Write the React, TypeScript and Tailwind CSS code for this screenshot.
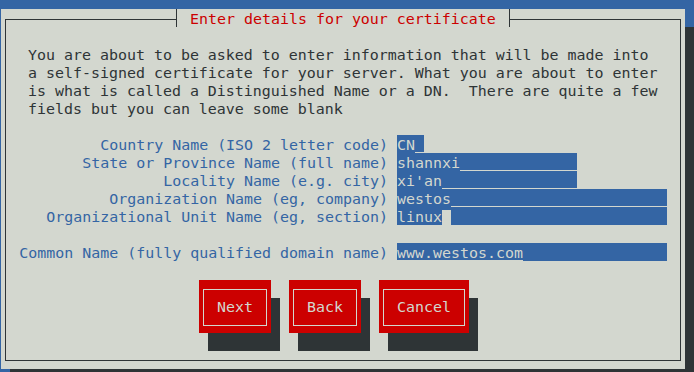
import React from "react";

function Fill({ cols }: { cols: number }) {
  return <span className="h-[18px] border-b border-[#d3d7cf]" style={{ width: cols * 9 }} />;
}

const fields: { label: string; value: React.ReactNode; w: string }[] = [
  {
    label: "Country Name (ISO 2 letter code)",
    value: (
      <>
        <span className="pt-[1px]">CN</span>
        <Fill cols={1} />
      </>
    ),
    w: "w-[27px]",
  },
  {
    label: "State or Province Name (full name)",
    value: (
      <>
        <span className="pt-[1px]">shannxi</span>
        <Fill cols={13} />
      </>
    ),
    w: "w-[180px]",
  },
  {
    label: "Locality Name (e.g. city)",
    value: (
      <>
        <span className="pt-[1px]">xi'an</span>
        <Fill cols={15} />
      </>
    ),
    w: "w-[180px]",
  },
  {
    label: "Organization Name (eg, company)",
    value: (
      <>
        <span className="pt-[1px]">westos</span>
        <Fill cols={24} />
      </>
    ),
    w: "w-[270px]",
  },
  {
    label: "Organizational Unit Name (eg, section)",
    value: (
      <>
        <span className="pt-[1px]">linux</span>
        <span className="mt-[3px] h-[15px] w-[9px] bg-[#d3d7cf]" />
      </>
    ),
    w: "w-[270px]",
  },
];

function Row({ label, value, w }: { label: string; value: React.ReactNode; w: string }) {
  return (
    <div className="flex h-[18px]">
      <div className="w-[382px] pt-[1px] text-right text-[#3465a4] whitespace-pre">{label}</div>
      <div className={`ml-[9px] flex h-[18px] items-start ${w} bg-[#3465a4] text-[#d3d7cf] whitespace-pre`}>{value}</div>
    </div>
  );
}

function Button({ label, w, first }: { label: string; w: string; first?: boolean }) {
  return (
    <div
      className={`${w} ${first ? "ml-[193px]" : "ml-[18px]"} h-[53px] bg-[#cc0000] px-[4px] pt-[9px] pb-[7px] shadow-[9px_18px_0_#2e3436]`}
    >
      <div className="h-full border border-[#d3d7cf] pl-[13px] pt-[8px] text-[#d3d7cf] whitespace-pre">{label}</div>
    </div>
  );
}

const body = [
  "You are about to be asked to enter information that will be made into",
  "a self-signed certificate for your server. What you are about to enter",
  "is what is called a Distinguished Name or a DN.  There are quite a few",
  "fields but you can leave some blank",
];

export default function App() {
  return (
    <div className="h-[372px] w-[694px] overflow-hidden bg-[#3465a4] pl-[1px] pt-[9px] font-['DejaVu_Sans_Mono',monospace] text-[14.95px] leading-[18px]">
      <div className="h-[360px] w-[684px] bg-[#d3d7cf] px-[4px] pt-[10px] shadow-[9px_18px_0_#2e3436]">
        <div className="h-[342px] border border-[#2e3436]">
          <div className="-mt-[11px] ml-[170px] h-[18px] w-[334px] border-x border-[#2e3436] bg-[#d3d7cf] px-[13px] pt-[1px] text-[#cc0000] whitespace-pre">
            Enter details for your certificate
          </div>
          <div className="mt-[18px] pl-[22px] text-[#2e3436] whitespace-pre">
            {body.map((l) => (
              <div key={l} className="h-[18px] pt-[1px]">
                {l}
              </div>
            ))}
          </div>
          <div className="mt-[18px]">
            {fields.map((f) => (
              <Row key={f.label} {...f} />
            ))}
          </div>
          <div className="mt-[18px]">
            <Row
              label="Common Name (fully qualified domain name)"
              value={<span className="h-[18px] border-b border-[#d3d7cf] pt-[1px]">www.westos.com</span>}
              w="w-[270px]"
            />
          </div>
          <div className="mt-[19px] flex">
            <Button label="Next" w="w-[72px]" first />
            <Button label="Back" w="w-[72px]" />
            <Button label="Cancel" w="w-[90px]" />
          </div>
        </div>
      </div>
    </div>
  );
}
